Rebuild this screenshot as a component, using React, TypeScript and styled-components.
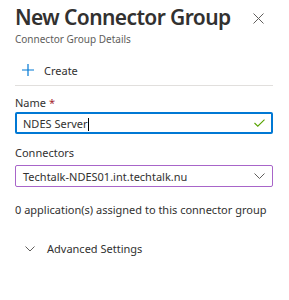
import React from 'react';
import styled, { createGlobalStyle } from 'styled-components';

const GlobalStyle = createGlobalStyle`
  html, body {
    margin: 0;
    padding: 0;
    background: #ffffff;
  }
  body {
    font-family: "Noto Sans", "Open Sans", Arial, sans-serif;
    color: #323130;
  }
`;

const Panel = styled.div`
  width: 258px;
  padding: 3px 16px 0 15px;
`;

const Header = styled.div`
  display: flex;
  align-items: flex-start;
  justify-content: space-between;
`;

const Title = styled.h1`
  margin: 0;
  font-size: 21px;
  line-height: 28px;
  font-weight: 600;
  color: #323130;
  letter-spacing: -0.6px;
`;

const CloseButton = styled.button`
  border: none;
  background: none;
  padding: 0;
  margin: 10px 9px 0 0;
  width: 11px;
  height: 11px;
  display: flex;
  cursor: pointer;
`;

const Subtitle = styled.div`
  margin-top: 1px;
  font-size: 10px;
  line-height: 14px;
  color: #605e5c;
`;

const Toolbar = styled.div`
  display: flex;
  align-items: center;
  height: 30px;
  margin-top: 9px;
  padding-left: 7px;
  border-bottom: 1px solid #e1dfdd;
`;

const ToolButton = styled.button`
  display: flex;
  align-items: center;
  gap: 10px;
  border: none;
  background: none;
  padding: 0;
  font-family: inherit;
  font-size: 11px;
  line-height: 15px;
  color: #323130;
`;

const Field = styled.div<{ $gap: number }>`
  margin-top: ${p => p.$gap}px;
`;

const Label = styled.div<{ $below: number }>`
  font-size: 11px;
  line-height: 15px;
  color: #323130;
  margin-bottom: ${p => p.$below}px;
`;

const Required = styled.span`
  color: #a4262c;
  margin-left: 3px;
`;

const InputBox = styled.div<{ $accent: string; $width: number }>`
  display: flex;
  align-items: center;
  justify-content: space-between;
  height: 22px;
  box-sizing: border-box;
  border: ${p => p.$width}px solid ${p => p.$accent};
  border-radius: 2px;
  padding: 0 ${p => 8 - p.$width}px 0 ${p => 8 - p.$width}px;
  font-size: 11px;
  color: #323130;
`;

const Caret = styled.span`
  display: inline-block;
  width: 1px;
  height: 13px;
  background: #000;
  vertical-align: -3px;
`;

const Info = styled.div`
  margin-top: 15px;
  font-size: 11px;
  line-height: 15px;
  color: #323130;
`;

const Expander = styled.div`
  display: flex;
  align-items: center;
  gap: 12px;
  height: 15px;
  margin-top: 24px;
  padding-left: 10px;
  font-size: 11px;
  color: #323130;
`;

export default function App() {
  return (
    <>
      <GlobalStyle />
      <Panel>
        <Header>
          <Title>New Connector Group</Title>
          <CloseButton aria-label="Close">
            <svg width="11" height="11" viewBox="0 0 11 11">
              <path d="M0.5 0.5 L10.5 10.5 M10.5 0.5 L0.5 10.5" stroke="#605e5c" strokeWidth="1" />
            </svg>
          </CloseButton>
        </Header>
        <Subtitle>Connector Group Details</Subtitle>
        <Toolbar>
          <ToolButton>
            <svg width="12" height="12" viewBox="0 0 12 12">
              <path d="M6 0 V12 M0 6 H12" stroke="#0078d4" strokeWidth="1.2" />
            </svg>
            Create
          </ToolButton>
        </Toolbar>
        <Field $gap={9}>
          <Label $below={2}>
            Name<Required>*</Required>
          </Label>
          <InputBox $accent="#0078d4" $width={2}>
            <span>
              NDES Server<Caret />
            </span>
            <svg width="11" height="8" viewBox="0 0 11 8">
              <path d="M0.5 4 L3.8 7.2 L10.5 0.6" stroke="#57a300" strokeWidth="1.1" fill="none" />
            </svg>
          </InputBox>
        </Field>
        <Field $gap={11}>
          <Label $below={5}>Connectors</Label>
          <InputBox $accent="#a865c9" $width={1}>
            <span>Techtalk-NDES01.int.techtalk.nu</span>
            <svg width="11" height="6" viewBox="0 0 11 6">
              <path d="M0.5 0.5 L5.5 5.5 L10.5 0.5" stroke="#605e5c" strokeWidth="1" fill="none" />
            </svg>
          </InputBox>
        </Field>
        <Info>0 application(s) assigned to this connector group</Info>
        <Expander>
          <svg width="10" height="6" viewBox="0 0 10 6">
            <path d="M0.5 0.5 L5 5 L9.5 0.5" stroke="#605e5c" strokeWidth="1" fill="none" />
          </svg>
          Advanced Settings
        </Expander>
      </Panel>
    </>
  );
}
